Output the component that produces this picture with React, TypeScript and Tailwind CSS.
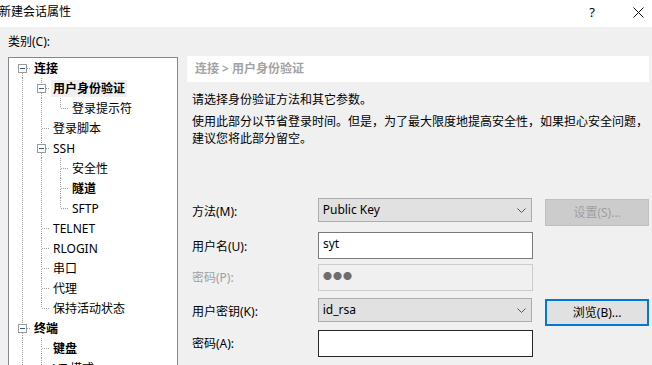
import React from "react";

type Node = {
  label: string;
  level: number;
  bold?: boolean;
  expanded?: boolean;
  selected?: boolean;
  hasNext: boolean;
  first?: boolean;
  cont: boolean[];
};

const nodes: Node[] = [
  { label: "连接", level: 0, bold: true, expanded: true, hasNext: true, first: true, cont: [] },
  { label: "用户身份验证", level: 1, bold: true, expanded: true, selected: true, hasNext: true, cont: [true] },
  { label: "登录提示符", level: 2, hasNext: false, cont: [true, true] },
  { label: "登录脚本", level: 1, hasNext: true, cont: [true] },
  { label: "SSH", level: 1, expanded: true, hasNext: true, cont: [true] },
  { label: "安全性", level: 2, hasNext: true, cont: [true, true] },
  { label: "隧道", level: 2, bold: true, hasNext: true, cont: [true, true] },
  { label: "SFTP", level: 2, hasNext: false, cont: [true, true] },
  { label: "TELNET", level: 1, hasNext: true, cont: [true] },
  { label: "RLOGIN", level: 1, hasNext: true, cont: [true] },
  { label: "串口", level: 1, hasNext: true, cont: [true] },
  { label: "代理", level: 1, hasNext: true, cont: [true] },
  { label: "保持活动状态", level: 1, hasNext: false, cont: [true] },
  { label: "终端", level: 0, bold: true, expanded: true, hasNext: true, cont: [] },
  { label: "键盘", level: 1, bold: true, hasNext: true, cont: [true] },
  { label: "VT 模式", level: 1, hasNext: true, cont: [true] },
];

const dot = "#a0a0a0";

function Slot({ line }: { line: boolean }) {
  return (
    <svg width="19" height="20" className="shrink-0">
      {line && <line x1="10.5" y1="0" x2="10.5" y2="20" stroke={dot} strokeDasharray="1 1" />}
    </svg>
  );
}

function OwnSlot({ node }: { node: Node }) {
  return (
    <svg width="19" height="20" className="shrink-0">
      {!node.first && <line x1="10.5" y1="0" x2="10.5" y2="10" stroke={dot} strokeDasharray="1 1" />}
      {node.hasNext && <line x1="10.5" y1="11" x2="10.5" y2="20" stroke={dot} strokeDasharray="1 1" />}
      <line x1="11" y1="10.5" x2="19" y2="10.5" stroke={dot} strokeDasharray="1 1" />
      {node.expanded && (
        <>
          <rect x="6.5" y="6.5" width="8" height="8" fill="#ffffff" stroke="#9b9b9b" />
          <line x1="8" y1="10.5" x2="13" y2="10.5" stroke="#2f5e8e" />
        </>
      )}
    </svg>
  );
}

function TreeRow({ node }: { node: Node }) {
  return (
    <div className="flex h-[20px] items-center">
      {node.cont.map((c, i) => (
        <Slot key={i} line={c} />
      ))}
      <OwnSlot node={node} />
      <span
        className={
          "ml-[1px] px-[2px] h-[17px] leading-[17px] whitespace-nowrap text-black " +
          (node.bold ? "font-bold " : "") +
          (node.selected ? "bg-[#f0f0f0]" : "")
        }
      >
        {node.label}
      </span>
    </div>
  );
}

function Chevron() {
  return (
    <svg width="9" height="5" viewBox="0 0 9 5" className="shrink-0">
      <polyline points="0.5,0.5 4.5,4.5 8.5,0.5" fill="none" stroke="#555" strokeWidth="1" />
    </svg>
  );
}

function Select({ value }: { value: string }) {
  return (
    <div className="flex h-[24px] w-[215px] items-center justify-between border border-[#adadad] bg-[#e1e1e1] pl-[4px] pr-[5px]">
      <span className="text-[12px] leading-[16px] text-black">{value}</span>
      <Chevron />
    </div>
  );
}

export default function App() {
  return (
    <div
      className="w-[652px] h-[365px] overflow-hidden bg-[#f0f0f0] text-[12px] text-black"
      style={{ fontFamily: '"Noto Sans", "Noto Sans CJK SC", sans-serif' }}
    >
      {/* title bar */}
      <div className="flex h-[27px] items-center justify-between bg-white">
        <span className="-ml-[1px] text-[12px] leading-[16px] -mt-[3px]">新建会话属性</span>
        <div className="flex items-center -mt-[3px]">
          <span className="w-[46px] text-center text-[13px] leading-[16px]">?</span>
          <div className="ml-[9px] flex w-[28px] justify-center">
            <svg width="11" height="11" viewBox="0 0 11 11">
              <path d="M0.5 0.5 L10.5 10.5 M10.5 0.5 L0.5 10.5" stroke="#111" strokeWidth="1" />
            </svg>
          </div>
        </div>
      </div>

      <div className="flex">
        {/* left column: category tree */}
        <div className="ml-[8px] w-[170px] shrink-0">
          <div className="pt-[7px] leading-[16px]">类别(C):</div>
          <div className="mt-[7px] h-[340px] border border-[#828790] bg-white pl-[3px]">
            {nodes.map((n, i) => (
              <TreeRow key={i} node={n} />
            ))}
          </div>
        </div>

        {/* right panel */}
        <div className="ml-[9px] w-[462px] shrink-0 pt-[29px]">
          <div className="flex h-[26px] items-center bg-white pl-[8px]">
            <span className="font-bold leading-[16px] text-[#a3a3a3]">连接 &gt; 用户身份验证</span>
          </div>
          <p className="mt-[10px] pl-[5px] leading-[16px]">请选择身份验证方法和其它参数。</p>
          <p className="mt-[5px] pl-[5px] leading-[17px]">
            使用此部分以节省登录时间。但是，为了最大限度地提高安全性，如果担心安全问题，
            <br />
            建议您将此部分留空。
          </p>

          <div className="mt-[51px] pl-[5px]">
            <div className="flex h-[34px] items-start">
              <span className="mt-[6px] w-[126px] leading-[16px]">方法(M):</span>
              <Select value="Public Key" />
              <div className="ml-[13px] mt-[1px] flex h-[27px] w-[104px] items-center justify-center border border-[#bfbfbf] bg-[#cccccc] text-[#a0a0a0]">
                设置(S)...
              </div>
            </div>
            <div className="flex h-[32px] items-start">
              <span className="mt-[7px] w-[126px] leading-[16px]">用户名(U):</span>
              <div className="flex h-[27px] w-[215px] items-center border border-[#7a7a7a] bg-white pl-[4px]">
                <span className="-mt-[3px] leading-[16px]">syt</span>
              </div>
            </div>
            <div className="flex h-[34px] items-start">
              <span className="mt-[6px] w-[126px] leading-[16px] text-[#a0a0a0]">密码(P):</span>
              <div className="flex h-[27px] w-[215px] items-center border border-[#cccccc] bg-[#f0f0f0] pl-[4px]">
                <span className="-mt-[3px] text-[9px] leading-[12px] tracking-[1px] text-[#6d6d6d]">●●●</span>
              </div>
            </div>
            <div className="flex h-[32px] items-start">
              <span className="mt-[6px] w-[126px] leading-[16px]">用户密钥(K):</span>
              <Select value="id_rsa" />
              <div className="ml-[13px] mt-[1px] flex h-[27px] w-[104px] items-center justify-center border-2 border-[#0078d7] bg-[#e1e1e1]">
                浏览(B)...
              </div>
            </div>
            <div className="flex h-[32px] items-start">
              <span className="mt-[6px] w-[126px] leading-[16px]">密码(A):</span>
              <div className="h-[27px] w-[215px] border border-[#262626] bg-white" />
            </div>
          </div>
        </div>
      </div>
    </div>
  );
}
